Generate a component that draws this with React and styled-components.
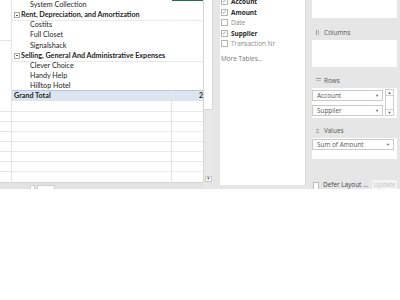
import React from 'react'
import styled, { createGlobalStyle } from 'styled-components'

const GlobalStyle = createGlobalStyle`
  html, body { margin: 0; padding: 0; background: #fff; }
  body { width: 400px; height: 300px; overflow: hidden; }
  * { box-sizing: border-box; }
`

const Window = styled.div`
  display: flex;
  width: 400px;
  height: 189px;
  background: #e6e6e6;
`

const Sheet = styled.div`
  display: grid;
  grid-template-columns: 203px 10px;
  grid-template-rows: 182px 7px;
  width: 213px;
  background: #fff;
`

const Cells = styled.div`
  overflow: hidden;
  font-family: Lato, "Liberation Sans", sans-serif;
  font-size: 7.2px;
  color: #262626;
`

const Row = styled.div`
  display: grid;
  grid-template-columns: 12px 160px 31px;
  height: 10.15px;
  line-height: 10px;
  background: ${p => p.$total ? '#dce6f1' : 'transparent'};
`

const ColA = styled.div`
  background: #fff;
  border-right: 1px solid #e4e4e4;
  border-bottom: 1px solid #e4e4e4;
`

const Label = styled.div`
  display: flex;
  align-items: center;
  gap: 1px;
  white-space: nowrap;
  padding-left: ${p => p.$indent}px;
  font-weight: ${p => p.$bold ? 700 : 400};
  border-bottom: 1px solid ${p => p.$line ? '#e9e9e9' : 'transparent'};
  border-right: 1px solid ${p => p.$grid ? '#e4e4e4' : 'transparent'};
  border-top: 1px solid ${p => p.$total ? '#b4c8e4' : 'transparent'};
  margin-top: -1px;
`

const Value = styled.div`
  overflow: hidden;
  white-space: nowrap;
  padding-left: 27px;
  font-weight: 700;
  border-bottom: 1px solid ${p => p.$line ? '#e9e9e9' : 'transparent'};
  border-top: 1px solid ${p => p.$selected ? '#217346' : p.$total ? '#b4c8e4' : 'transparent'};
  margin-top: ${p => p.$selected ? 0 : -1}px;
`

const Collapse = styled.span`
  position: relative;
  width: 6px;
  height: 6px;
  border: 1px solid #a8a8a8;
  background: #fff;
  flex: none;
  &::after {
    content: '';
    position: absolute;
    left: 1px;
    right: 1px;
    top: 1.5px;
    height: 1px;
    background: #555;
  }
`

const VScroll = styled.div`
  display: flex;
  flex-direction: column;
  background: #e8e8e8;
  border-left: 1px solid #d4d4d4;
`

const Thumb = styled.div`
  height: 110px;
  background: #fff;
  border-right: 1px solid #d8d8d8;
  border-bottom: 1px solid #d8d8d8;
`

const ArrowBtn = styled.div`
  margin: auto 0 0 1px;
  width: 7px;
  height: 6px;
  background: #fff;
  border: 1px solid #c8c8c8;
  font-size: 5px;
  line-height: 4px;
  text-align: center;
  color: #555;
`

const HScroll = styled.div`
  display: flex;
  align-items: flex-end;
  gap: 2px;
  padding-left: 30px;
  background: #e3e3e3;
  border-top: 1px solid #d4d4d4;
`

const HTab = styled.div`
  width: ${p => p.$w}px;
  height: 4px;
  background: #fff;
  border: 1px solid #d0d0d0;
  border-bottom: 0;
`

const Corner = styled.div`
  background: #e6e6e6;
`

const Pane = styled.div`
  display: flex;
  flex: 1;
  padding-left: 7px;
  font-family: "Open Sans", "Liberation Sans", sans-serif;
  font-size: 6.4px;
`

const FieldList = styled.div`
  width: 86px;
  height: 185px;
  background: #fff;
  border-right: 1px solid #d6d6d6;
  padding-left: 1px;
  overflow: hidden;
`

const Fields = styled.div`
  margin-top: -3.5px;
`

const Field = styled.div`
  display: flex;
  align-items: center;
  gap: 3px;
  height: 10.5px;
  color: ${p => p.$on ? '#262626' : '#8a8a8a'};
  font-weight: ${p => p.$on ? 700 : 400};
`

const Box = styled.span`
  width: 7px;
  height: 7px;
  border: 1px solid #b4b4b4;
  background: #fff;
  color: #8a8a8a;
  font-size: 5.5px;
  line-height: 5px;
  text-align: center;
  flex: none;
  font-weight: 400;
`

const MoreLink = styled.div`
  margin-top: 5px;
  color: #777;
`

const Areas = styled.div`
  display: flex;
  flex-direction: column;
  flex: 1;
  padding: 0 3px 0 6px;
  color: #666;
`

const AreaBox = styled.div`
  height: ${p => p.$h}px;
  background: #fff;
  padding-top: 1px;
`

const AreaHead = styled.div`
  display: flex;
  align-items: flex-end;
  gap: 3px;
  height: ${p => p.$h}px;
  padding: 0 0 2px 4px;
  line-height: 10px;
  color: #555;
`

const HeadIcon = styled.svg`
  width: 5px;
  height: 5px;
  margin-bottom: 3px;
`

const Sigma = styled.span`
  font-size: 6px;
  color: #888;
  width: 5px;
`

const RowsBody = styled.div`
  display: flex;
  gap: 2px;
`

const Stack = styled.div`
  display: flex;
  flex-direction: column;
  gap: 4px;
  padding-top: 1px;
`

const Drop = styled.div`
  display: flex;
  align-items: center;
  justify-content: space-between;
  width: ${p => p.$w}px;
  height: 11px;
  padding: 0 3px 0 4px;
  border: 1px solid #c9c9c9;
  background: #fff;
  color: #555;
`

const Caret = styled.span`
  font-size: 4px;
  color: #666;
`

const MiniScroll = styled.div`
  display: flex;
  flex-direction: column;
  width: 9px;
  height: 27px;
  border: 1px solid #cfcfcf;
`

const MiniBtn = styled.div`
  height: 6px;
  font-size: 4px;
  line-height: 6px;
  text-align: center;
  color: #555;
  border-${p => p.$side}: 1px solid #cfcfcf;
`

const MiniTrack = styled.div`
  flex: 1;
`

const Footer = styled.div`
  display: flex;
  align-items: flex-end;
  margin-top: auto;
  gap: 4px;
  height: 11px;
  white-space: nowrap;
`

const DeferBox = styled.span`
  width: 6px;
  height: 7px;
  margin-left: 1px;
  background: #fff;
  border: 1px solid #bdbdbd;
  border-bottom: 0;
  flex: none;
`

const DeferText = styled.span`
  color: #444;
  line-height: 8px;
  flex: 1;
`

const UpdateBtn = styled.div`
  width: 25px;
  height: 9px;
  background: #f4f4f4;
  color: #c2c2c2;
  text-align: center;
  line-height: 10px;
  flex: none;
`

const rows = [
  { label: 'System Collection', indent: 18, selected: true },
  { label: 'Rent, Depreciation, and Amortization', head: true },
  { label: 'Costits', indent: 18 },
  { label: 'Full Closet', indent: 18 },
  { label: 'Signalshack', indent: 18 },
  { label: 'Selling, General And Administrative Expenses', head: true },
  { label: 'Clever Choice', indent: 18 },
  { label: 'Handy Help', indent: 18 },
  { label: 'Hilltop Hotel', indent: 18 },
  { label: 'Grand Total', indent: 2, total: true, value: '2,458.00' },
]

const fields = [
  { name: 'Account', on: true },
  { name: 'Amount', on: true },
  { name: 'Date' },
  { name: 'Supplier', on: true },
  { name: 'Transaction Nr' },
]

function SheetRows() {
  const empty = Array.from({ length: 8 }, (_, i) => i)
  return (
    <Cells>
      {rows.map(r => (
        <Row key={r.label} $total={r.total}>
          <ColA />
          <Label $indent={r.head ? 2 : r.indent} $bold={r.head || r.total} $line={r.head} $total={r.total}>
            {r.head && <Collapse />}
            {r.label}
          </Label>
          <Value $line={r.head} $total={r.total} $selected={r.selected}>{r.value}</Value>
        </Row>
      ))}
      {empty.map(i => (
        <Row key={i}>
          <ColA />
          <Label $line $grid />
          <Value $line />
        </Row>
      ))}
    </Cells>
  )
}

export default function App() {
  return (
    <>
      <GlobalStyle />
      <Window>
        <Sheet>
          <SheetRows />
          <VScroll>
            <Thumb />
            <ArrowBtn>▾</ArrowBtn>
          </VScroll>
          <HScroll>
            <HTab $w={5} />
            <HTab $w={18} />
          </HScroll>
          <Corner />
        </Sheet>

        <Pane>
          <FieldList>
            <Fields>
              {fields.map(f => (
                <Field key={f.name} $on={f.on}>
                  <Box>{f.on ? '✓' : ''}</Box>
                  {f.name}
                </Field>
              ))}
            </Fields>
            <MoreLink>More Tables...</MoreLink>
          </FieldList>

          <Areas>
            <AreaBox $h={18} />
            <AreaHead $h={22}>
              <HeadIcon viewBox="0 0 5 5">
                <rect x="0" y="0" width="1" height="5" fill="#999" />
                <rect x="2" y="0" width="1" height="5" fill="#bbb" />
              </HeadIcon>
              Columns
            </AreaHead>
            <AreaBox $h={27} />
            <AreaHead $h={21}>
              <HeadIcon viewBox="0 0 5 5">
                <rect x="0" y="0" width="5" height="1" fill="#999" />
                <rect x="0" y="2" width="5" height="1" fill="#bbb" />
              </HeadIcon>
              Rows
            </AreaHead>
            <AreaBox $h={30}>
              <RowsBody>
                <Stack>
                  <Drop $w={71}>Account<Caret>▼</Caret></Drop>
                  <Drop $w={71}>Supplier<Caret>▼</Caret></Drop>
                </Stack>
                <MiniScroll>
                  <MiniBtn $side="bottom">▲</MiniBtn>
                  <MiniTrack />
                  <MiniBtn $side="top">▼</MiniBtn>
                </MiniScroll>
              </RowsBody>
            </AreaBox>
            <AreaHead $h={20}>
              <Sigma>Σ</Sigma>
              Values
            </AreaHead>
            <AreaBox $h={21}>
              <Drop $w={82}>Sum of Amount<Caret>▼</Caret></Drop>
            </AreaBox>
            <Footer>
              <DeferBox />
              <DeferText>Defer Layout ...</DeferText>
              <UpdateBtn>Update</UpdateBtn>
            </Footer>
          </Areas>
        </Pane>
      </Window>
    </>
  )
}
